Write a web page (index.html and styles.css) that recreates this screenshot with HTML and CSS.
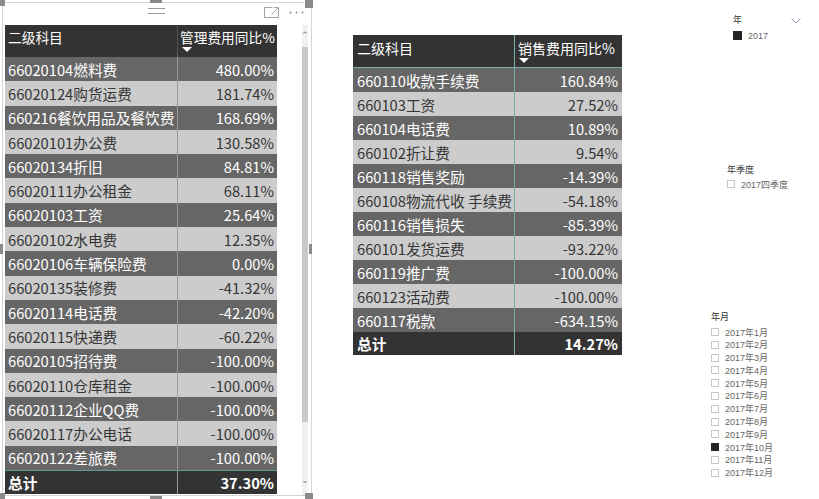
FILE: index.html
```html
<!DOCTYPE html>
<html lang="zh-CN">
<head>
<meta charset="utf-8">
<title>报表</title>
<link rel="stylesheet" href="styles.css">
</head>
<body>
<div class="canvas">

  <div class="visual-main">
    <div class="vis-top">
      <span class="drag"></span>
      <svg class="focus-icon" width="15" height="11" viewBox="0 0 15 11">
        <path d="M8.5 0.5H0.5V10.5H14.5V4.5" fill="none" stroke="#a0a0a0" stroke-width="1"/>
        <path d="M7.5 7.5L14 1M10 0.5H14.5V5" fill="none" stroke="#a0a0a0" stroke-width="1"/>
      </svg>
      <svg class="more" width="15" height="3" viewBox="0 0 15 3">
        <circle cx="1.5" cy="1.5" r="1" fill="#8c8c8c"/>
        <circle cx="7.5" cy="1.5" r="1" fill="#8c8c8c"/>
        <circle cx="13.5" cy="1.5" r="1" fill="#8c8c8c"/>
      </svg>
    </div>
    <div class="vis-body">
      <div class="tbl tbl-left">
        <div class="row head"><div class="c1">二级科目</div><div class="c2">管理费用同比%<span class="sort"></span></div></div>
        <div class="row dark"><div class="c1">66020104燃料费</div><div class="c2">480.00%</div></div>
        <div class="row light"><div class="c1">66020124购货运费</div><div class="c2">181.74%</div></div>
        <div class="row dark"><div class="c1">660216餐饮用品及餐饮费</div><div class="c2">168.69%</div></div>
        <div class="row light"><div class="c1">66020101办公费</div><div class="c2">130.58%</div></div>
        <div class="row dark"><div class="c1">66020134折旧</div><div class="c2">84.81%</div></div>
        <div class="row light"><div class="c1">66020111办公租金</div><div class="c2">68.11%</div></div>
        <div class="row dark"><div class="c1">66020103工资</div><div class="c2">25.64%</div></div>
        <div class="row light"><div class="c1">66020102水电费</div><div class="c2">12.35%</div></div>
        <div class="row dark"><div class="c1">66020106车辆保险费</div><div class="c2">0.00%</div></div>
        <div class="row light"><div class="c1">66020135装修费</div><div class="c2">-41.32%</div></div>
        <div class="row dark"><div class="c1">66020114电话费</div><div class="c2">-42.20%</div></div>
        <div class="row light"><div class="c1">66020115快递费</div><div class="c2">-60.22%</div></div>
        <div class="row dark"><div class="c1">66020105招待费</div><div class="c2">-100.00%</div></div>
        <div class="row light"><div class="c1">66020110仓库租金</div><div class="c2">-100.00%</div></div>
        <div class="row dark"><div class="c1">66020112企业QQ费</div><div class="c2">-100.00%</div></div>
        <div class="row light"><div class="c1">66020117办公电话</div><div class="c2">-100.00%</div></div>
        <div class="row dark"><div class="c1">66020122差旅费</div><div class="c2">-100.00%</div></div>
        <div class="row total"><div class="c1">总计</div><div class="c2">37.30%</div></div>
      </div>
      <div class="scrollbar">
        <span class="arrow up">&#8963;</span>
        <span class="thumb"></span>
        <span class="track"></span>
        <span class="arrow down">&#8964;</span>
      </div>
    </div>
  </div>

  <span class="handle h-tl"></span>
  <span class="handle h-tm"></span>
  <span class="handle h-tr"></span>
  <span class="handle h-ml"></span>
  <span class="handle h-mr"></span>
  <span class="handle h-bl"></span>
  <span class="handle h-bm"></span>
  <span class="handle h-br"></span>

  <div class="visual-mid">
    <div class="tbl tbl-mid">
      <div class="row head"><div class="c1">二级科目</div><div class="c2">销售费用同比%<span class="sort"></span></div></div>
      <div class="row dark"><div class="c1">660110收款手续费</div><div class="c2">160.84%</div></div>
      <div class="row light"><div class="c1">660103工资</div><div class="c2">27.52%</div></div>
      <div class="row dark"><div class="c1">660104电话费</div><div class="c2">10.89%</div></div>
      <div class="row light"><div class="c1">660102折让费</div><div class="c2">9.54%</div></div>
      <div class="row dark"><div class="c1">660118销售奖励</div><div class="c2">-14.39%</div></div>
      <div class="row light"><div class="c1">660108物流代收 手续费</div><div class="c2">-54.18%</div></div>
      <div class="row dark"><div class="c1">660116销售损失</div><div class="c2">-85.39%</div></div>
      <div class="row light"><div class="c1">660101发货运费</div><div class="c2">-93.22%</div></div>
      <div class="row dark"><div class="c1">660119推广费</div><div class="c2">-100.00%</div></div>
      <div class="row light"><div class="c1">660123活动费</div><div class="c2">-100.00%</div></div>
      <div class="row dark"><div class="c1">660117税款</div><div class="c2">-634.15%</div></div>
      <div class="row total"><div class="c1">总计</div><div class="c2">14.27%</div></div>
    </div>
  </div>

  <div class="slicer s-year">
    <div class="s-head">
      <span>年</span>
      <svg class="chev" width="10" height="6" viewBox="0 0 10 6"><path d="M0.5 0.5L5 5L9.5 0.5" fill="none" stroke="#8a9bb0" stroke-width="1"/></svg>
    </div>
    <div class="s-item"><span class="box on big"></span><span>2017</span></div>
  </div>

  <div class="slicer s-quarter">
    <div class="s-head"><span>年季度</span></div>
    <div class="s-item"><span class="box"></span><span>2017四季度</span></div>
  </div>

  <div class="slicer s-month">
    <div class="s-head"><span>年月</span></div>
    <div class="s-item"><span class="box"></span><span>2017年1月</span></div>
    <div class="s-item"><span class="box"></span><span>2017年2月</span></div>
    <div class="s-item"><span class="box"></span><span>2017年3月</span></div>
    <div class="s-item"><span class="box"></span><span>2017年4月</span></div>
    <div class="s-item"><span class="box"></span><span>2017年5月</span></div>
    <div class="s-item"><span class="box"></span><span>2017年6月</span></div>
    <div class="s-item"><span class="box"></span><span>2017年7月</span></div>
    <div class="s-item"><span class="box"></span><span>2017年8月</span></div>
    <div class="s-item"><span class="box"></span><span>2017年9月</span></div>
    <div class="s-item"><span class="box on"></span><span>2017年10月</span></div>
    <div class="s-item"><span class="box"></span><span>2017年11月</span></div>
    <div class="s-item"><span class="box"></span><span>2017年12月</span></div>
  </div>

</div>
</body>
</html>
```

FILE: styles.css
```css
* { box-sizing: border-box; }

body {
  margin: 0;
  background: #ffffff;
  font-family: "Noto Sans CJK SC", "Liberation Sans", sans-serif;
}

.canvas {
  position: relative;
  width: 819px;
  height: 499px;
  overflow: hidden;
  background: #ffffff;
}

/* ---------- left visual (selected) ---------- */
.visual-main {
  position: absolute;
  left: 2px;
  top: 2px;
  width: 310px;
  height: 494px;
  border: 1px solid #d4d4d4;
  display: flex;
  flex-direction: column;
}

.vis-top {
  position: relative;
  height: 22px;
  flex: none;
  display: flex;
  align-items: center;
  justify-content: flex-end;
  gap: 10px;
  padding-right: 7px;
}

.drag {
  position: absolute;
  left: 145px;
  top: 5px;
  width: 17px;
  height: 6px;
  border-top: 1px solid #9a9a9a;
  border-bottom: 1px solid #9a9a9a;
}

.focus-icon { display: block; margin-top: -3px; }
.more { display: block; margin-top: -3px; }

.vis-body {
  flex: 1;
  display: flex;
  padding-left: 2px;
  min-height: 0;
}

.scrollbar {
  width: 6px;
  margin-left: 25px;
  display: flex;
  flex-direction: column;
  align-items: center;
  background: #f0f0f0;
}

.arrow {
  font-size: 9px;
  line-height: 1;
  color: #777;
  display: flex;
  justify-content: center;
}
.arrow.up { height: 22px; align-items: flex-end; padding-bottom: 8px; }
.arrow.down { height: 20px; align-items: flex-start; }

.thumb {
  width: 6px;
  height: 375px;
  background: #c8c8c8;
}
.track { flex: 1; }

/* selection handles */
.handle {
  position: absolute;
  background: #8a8a8a;
}
.h-tl { left: 0; top: 0; width: 5px; height: 6px; }
.h-tm { left: 150px; top: 0; width: 12px; height: 3px; }
.h-tr { left: 305px; top: 0; width: 8px; height: 8px; }
.h-ml { left: 0; top: 244px; width: 3px; height: 10px; }
.h-mr { left: 309px; top: 244px; width: 3px; height: 10px; }
.h-bl { left: 0; top: 493px; width: 5px; height: 6px; }
.h-bm { left: 150px; top: 496px; width: 12px; height: 3px; }
.h-br { left: 305px; top: 493px; width: 8px; height: 6px; }

/* ---------- tables ---------- */
.tbl { display: flex; flex-direction: column; }

.row { display: grid; }

.row > div { height: 100%; display: flex; align-items: center; white-space: nowrap; }
.row .c2 { justify-content: flex-end; position: relative; }

.row.dark { background: #666666; color: #ffffff; }
.row.light { background: #cccccc; color: #363636; }
.row.head { background: #333333; color: #ffffff; }
.row.total { background: #333333; color: #ffffff; font-weight: bold; }

.row.head > div { align-items: flex-start; line-height: 18px; }
.row.head .c2 { justify-content: flex-start; }

.sort {
  position: absolute;
  width: 0;
  height: 0;
  border-left: 5px solid transparent;
  border-right: 5px solid transparent;
  border-top: 5px solid #ffffff;
}

/* left table */
.tbl-left { width: 272px; }
.tbl-left .row { grid-template-columns: 172px 100px; font-size: 14.7px; height: 24.3px; }
.tbl-left .row > div { padding: 0 3px; }
.tbl-left .row .c2 { border-left: 1px solid #9a9a9a; }
.tbl-left .row.head { height: 32px; font-size: 13.7px; }
.tbl-left .row.head > div { padding-top: 3px; }
.tbl-left .row.head .c2 { padding-left: 2px; border-left-color: #555; }
.tbl-left .sort { left: 4px; top: 22px; }
.tbl-left .row.total { height: 24px; border-top: 1px solid #5f9f98; }

/* middle visual */
.visual-mid {
  position: absolute;
  left: 353px;
  top: 35px;
  width: 269px;
}
.tbl-mid .row { grid-template-columns: 161px 108px; font-size: 14.7px; height: 24px; }
.tbl-mid .row > div { padding: 0 4px; }
.tbl-mid .row .c2 { border-left: 1px solid #7aaea8; }
.tbl-mid .row.head { height: 33px; font-size: 14px; border-bottom: 1px solid #7aaea8; }
.tbl-mid .row.head > div { padding-top: 4px; }
.tbl-mid .row.head .c2 { padding-left: 3px; }
.tbl-mid .sort { left: 4px; top: 23px; }
.tbl-mid .row.total { height: 23px; }

/* ---------- slicers ---------- */
.slicer {
  position: absolute;
  font-size: 9px;
  color: #333333;
}

.s-head {
  height: 12px;
  line-height: 12px;
  display: flex;
  align-items: center;
  justify-content: space-between;
}

.s-item {
  height: 12.8px;
  display: flex;
  align-items: center;
  gap: 6px;
  color: #666666;
  font-family: "Liberation Sans", "Noto Sans CJK SC", sans-serif;
}

.box {
  width: 8px;
  height: 8px;
  border: 1px solid #c8c8c8;
  background: #ffffff;
  flex: none;
}
.box.on { background: #252525; border-color: #252525; }
.box.big { width: 9px; height: 9px; }

.s-year { left: 733px; top: 14px; width: 68px; }
.s-year .s-item { margin-top: 3.5px; }
.chev { display: block; margin-top: 1px; }

.s-quarter { left: 727px; top: 164px; }
.s-quarter .s-item { margin-top: 2px; }

.s-month { left: 711px; top: 311px; }
.s-month .s-head { margin-bottom: 2.6px; }
```
